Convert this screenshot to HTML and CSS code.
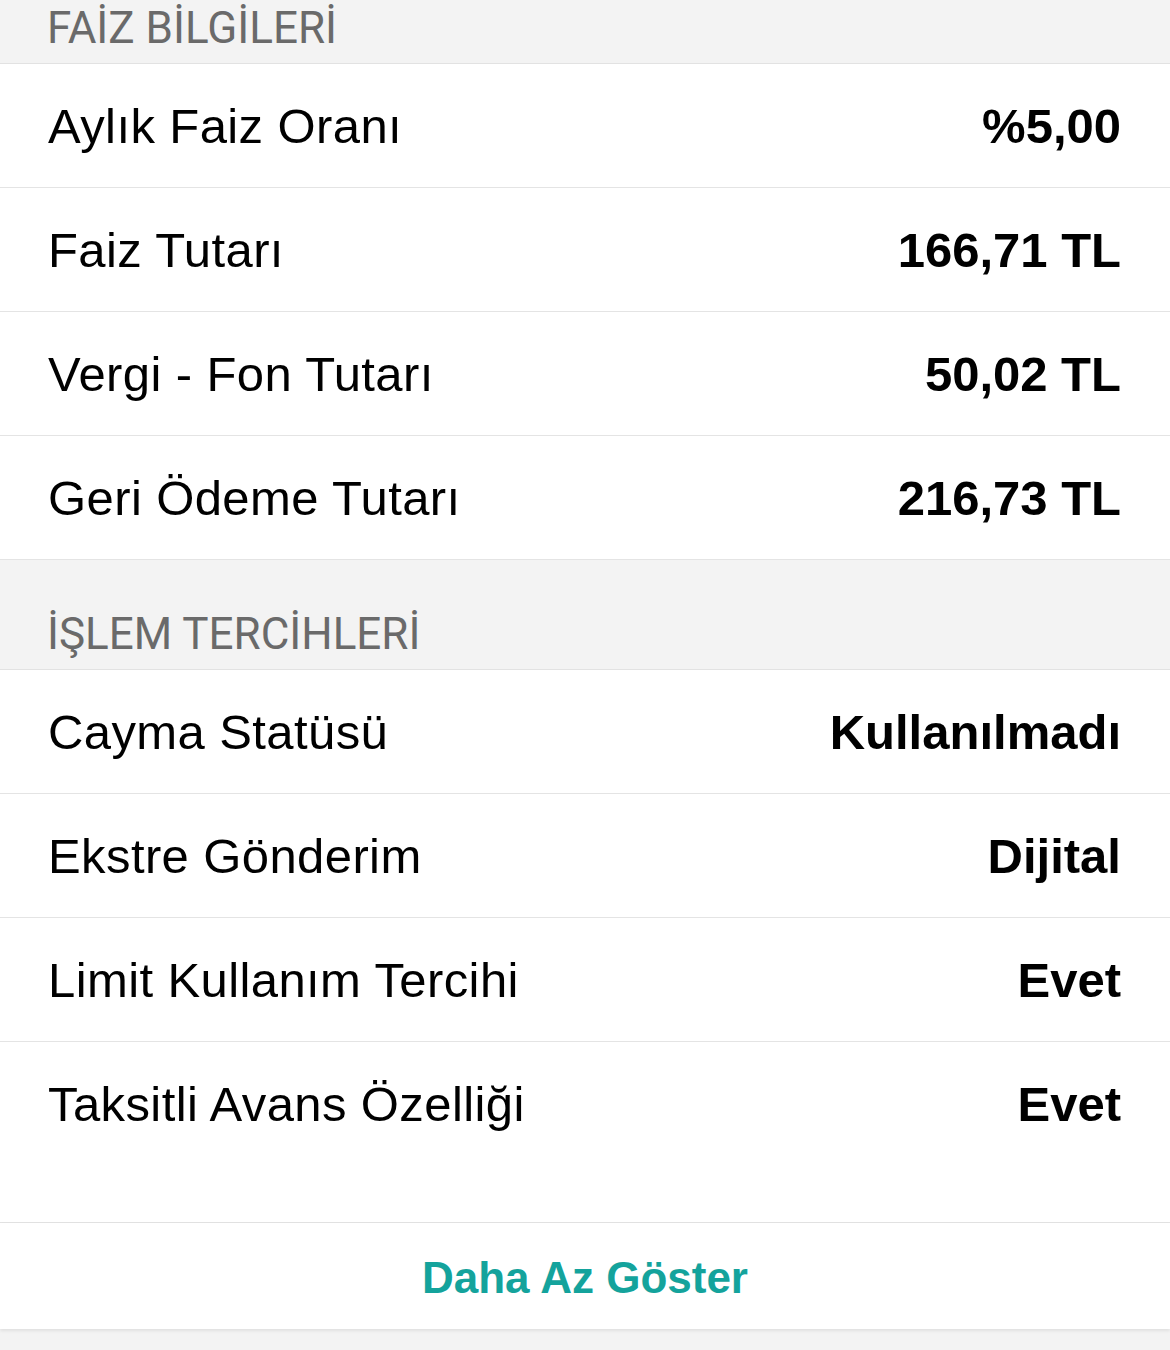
FILE: index.html
```html
<!DOCTYPE html>
<html lang="tr">
<head>
<meta charset="utf-8">
<link rel="stylesheet" href="styles.css">
</head>
<body>
<div class="page">
  <div class="section-header first"><span>FAİZ BİLGİLERİ</span></div>
  <div class="list">
    <div class="row"><span class="label">Aylık Faiz Oranı</span><span class="value">%5,00</span></div>
    <div class="row"><span class="label">Faiz Tutarı</span><span class="value">166,71 TL</span></div>
    <div class="row"><span class="label">Vergi - Fon Tutarı</span><span class="value">50,02 TL</span></div>
    <div class="row"><span class="label">Geri Ödeme Tutarı</span><span class="value">216,73 TL</span></div>
  </div>
  <div class="section-header"><span>İŞLEM TERCİHLERİ</span></div>
  <div class="list">
    <div class="row"><span class="label">Cayma Statüsü</span><span class="value">Kullanılmadı</span></div>
    <div class="row"><span class="label">Ekstre Gönderim</span><span class="value">Dijital</span></div>
    <div class="row"><span class="label">Limit Kullanım Tercihi</span><span class="value">Evet</span></div>
    <div class="row last"><span class="label">Taksitli Avans Özelliği</span><span class="value">Evet</span></div>
    <div class="spacer"></div>
  </div>
  <div class="action"><span class="action-text">Daha Az Göster</span></div>
  <div class="footer"></div>
</div>
</body>
</html>
```
FILE: styles.css
```css
html, body {
  margin: 0;
  padding: 0;
  background: #f3f3f3;
}
.page {
  width: 1170px;
  display: flex;
  flex-direction: column;
}
.section-header {
  height: 110px;
  box-sizing: border-box;
  background: #f3f3f3;
  border-bottom: 1px solid #e2e2e2;
  display: flex;
  align-items: flex-end;
  padding: 0 0 13px 47px;
  font-family: Roboto, "Noto Sans", sans-serif;
  font-size: 44px;
  color: #6a6a6a;
  line-height: 1;
}
.section-header.first {
  height: 64px;
}
.list {
  background: #fff;
  display: flex;
  flex-direction: column;
}
.row {
  height: 124px;
  box-sizing: border-box;
  border-bottom: 1px solid #e4e4e4;
  display: flex;
  align-items: center;
  justify-content: space-between;
  padding: 0 49px 0 48px;
  font-family: "Liberation Sans", Arial, sans-serif;
  font-size: 49px;
  color: #000;
}
.label {
  letter-spacing: 0.4px;
}
.row.last {
  border-bottom: none;
  height: 123px;
}
.spacer {
  height: 57px;
  border-bottom: 1px solid #e2e2e2;
}
.value {
  font-weight: bold;
}
.action {
  height: 106px;
  background: #fff;
  display: flex;
  align-items: center;
  justify-content: center;
  box-shadow: 0 2px 3px rgba(0,0,0,0.08);
  position: relative;
}
.action-text {
  font-family: "Liberation Sans", Arial, sans-serif;
  font-weight: bold;
  font-size: 44px;
  color: #14a39c;
  padding-top: 4px;
}
.footer {
  height: 40px;
  background: #f3f3f3;
}
```
